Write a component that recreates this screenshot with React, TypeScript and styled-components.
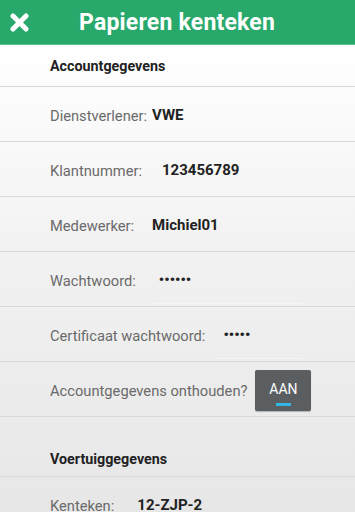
import React from "react";
import styled, { createGlobalStyle } from "styled-components";

const GlobalStyle = createGlobalStyle`
  html, body {
    margin: 0;
    padding: 0;
    background: #e6e6e6;
  }
  body {
    font-family: Roboto, "Liberation Sans", Arial, sans-serif;
  }
`;

const Screen = styled.div`
  width: 355px;
  height: 512px;
  overflow: hidden;
  display: flex;
  flex-direction: column;
`;

const TopBar = styled.header`
  height: 44px;
  flex: 0 0 44px;
  background: #28a96b;
  display: flex;
  align-items: center;
  border-bottom: 1px solid #5cc08f;
`;

const CloseButton = styled.button`
  width: 38px;
  height: 44px;
  padding: 0 0 0 10px;
  border: none;
  background: none;
  display: flex;
  align-items: center;
  cursor: pointer;
`;

const Title = styled.h1`
  margin: 0 0 0 41px;
  color: #fff;
  font-size: 23px;
  font-weight: 700;
  letter-spacing: 0.2px;
`;

const Content = styled.main`
  flex: 1;
  background: linear-gradient(#ffffff 0%, #f1f1f1 45%, #e6e6e6 100%);
`;

const SectionTitle = styled.div<{ $top: number; $height: number }>`
  height: ${(p) => p.$height}px;
  padding: ${(p) => p.$top}px 0 0 50px;
  box-sizing: border-box;
  display: flex;
  align-items: center;
  font-size: 14.3px;
  font-weight: 700;
  color: #222;
  border-bottom: 1px solid #d8d8d8;
`;

const Row = styled.div`
  height: 55px;
  box-sizing: border-box;
  padding: 3px 0 0 50px;
  display: flex;
  align-items: center;
  border-bottom: 1px solid #d8d8d8;
`;

const Label = styled.span`
  font-size: 14.7px;
  color: #6a6a6a;
  white-space: nowrap;
`;

const Field = styled.div<{ $gap: number; $width?: number; $line?: boolean }>`
  margin: 2px 0 2px ${(p) => p.$gap}px;
  width: ${(p) => (p.$width ? `${p.$width}px` : "auto")};
  box-sizing: border-box;
  align-self: stretch;
  display: flex;
  align-items: center;
  padding-left: ${(p) => (p.$line ? 6 : 0)}px;
  border-bottom: 1px solid ${(p) => (p.$line ? "#f5f5f5" : "transparent")};
  font-size: 15px;
  font-weight: 700;
  color: #222;
`;

const Dots = styled.span`
  font-size: 15px;
  font-weight: 700;
  color: #222;
`;

const Toggle = styled.button<{ $on: boolean }>`
  margin-left: 8px;
  width: 56px;
  height: 41px;
  border: none;
  border-radius: 2px;
  background: #5a5e61;
  box-shadow: 0 1px 1px rgba(0, 0, 0, 0.25);
  color: #fff;
  font-family: Roboto, "Liberation Sans", Arial, sans-serif;
  font-size: 14px;
  display: flex;
  flex-direction: column;
  align-items: center;
  justify-content: center;
  gap: 6px;
  padding: 6px 0 0;
  &::after {
    content: "";
    width: 15px;
    height: 3px;
    background: ${(p) => (p.$on ? "#33b5e5" : "#8a8d90")};
  }
`;

const CloseIcon = () => (
  <svg width="19" height="19" viewBox="0 0 19 19">
    <path
      d="M3 3 L16 16 M16 3 L3 16"
      stroke="#fff"
      strokeWidth="5"
      strokeLinecap="round"
    />
  </svg>
);

const App = () => {
  return (
    <Screen>
      <GlobalStyle />
      <TopBar>
        <CloseButton aria-label="Sluiten">
          <CloseIcon />
        </CloseButton>
        <Title>Papieren kenteken</Title>
      </TopBar>
      <Content>
        <SectionTitle $top={0} $height={42}>
          Accountgegevens
        </SectionTitle>
        <Row>
          <Label>Dienstverlener:</Label>
          <Field $gap={5}>VWE</Field>
        </Row>
        <Row>
          <Label>Klantnummer:</Label>
          <Field $gap={14} $width={146} $line>
            123456789
          </Field>
        </Row>
        <Row>
          <Label>Medewerker:</Label>
          <Field $gap={18}>Michiel01</Field>
        </Row>
        <Row>
          <Label>Wachtwoord:</Label>
          <Field $gap={17} $width={150} $line>
            <Dots>••••••</Dots>
          </Field>
        </Row>
        <Row>
          <Label>Certificaat wachtwoord:</Label>
          <Field $gap={12} $width={85} $line>
            <Dots>•••••</Dots>
          </Field>
        </Row>
        <Row>
          <Label>Accountgegevens onthouden?</Label>
          <Toggle $on>AAN</Toggle>
        </Row>
        <SectionTitle $top={24} $height={60}>
          Voertuiggegevens
        </SectionTitle>
        <Row>
          <Label>Kenteken:</Label>
          <Field $gap={23}>12-ZJP-2</Field>
        </Row>
      </Content>
    </Screen>
  );
};

export default App;
